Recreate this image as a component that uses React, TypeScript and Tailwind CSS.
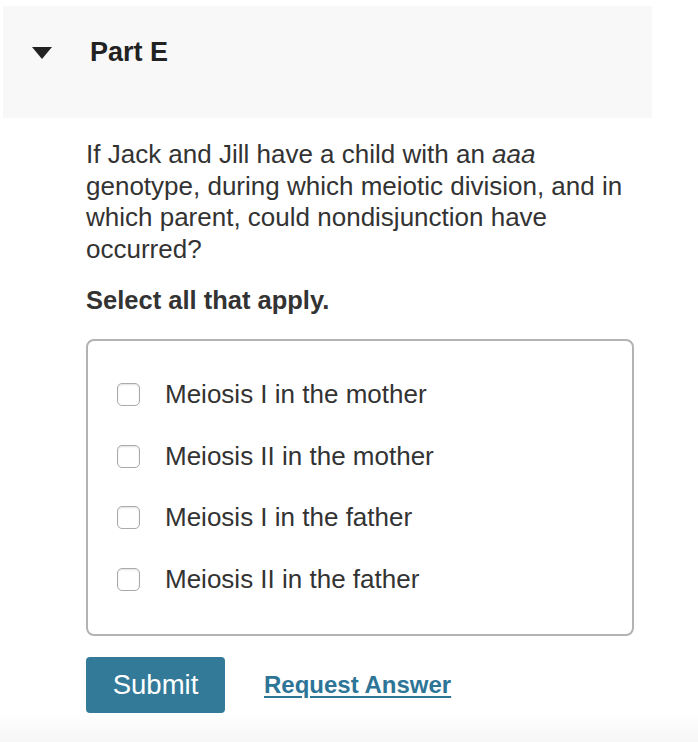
import React from 'react';

const options = [
    'Meiosis I in the mother',
    'Meiosis II in the mother',
    'Meiosis I in the father',
    'Meiosis II in the father',
];

export default function App() {
    return (
        <div className="w-[698px] h-[742px] bg-white overflow-hidden flex flex-col text-[#333]" style={{ fontFamily: '"Liberation Sans", Arial, sans-serif' }}>
            <div className="ml-[3px] mt-[6px] w-[649px] h-[112px] bg-[#f8f8f8] flex items-center shrink-0">
                <svg className="ml-[29px] mt-[-18px]" width="20" height="12" viewBox="0 0 20 12">
                    <polygon points="0,0 20,0 10,12" fill="#222" />
                </svg>
                <h2 className="ml-[38px] mt-[-20px] text-[27px] font-bold text-[#222]">Part E</h2>
            </div>

            <div className="pl-[86px] w-[634px] box-content">
                <p className="mt-[21px] text-[26px] leading-[31.5px] w-[548px]">
                    If Jack and Jill have a child with an <i>aaa</i> genotype, during which meiotic division, and in which parent, could nondisjunction have occurred?
                </p>
                <p className="mt-[19px] text-[25.5px] leading-[32px] font-bold">Select all that apply.</p>

                <div className="mt-[23px] w-[548px] h-[297px] border-2 border-[#b3b3b3] rounded-[8px] pt-[38px] flex flex-col">
                    {options.map((o) => (
                        <label key={o} className="h-[61.5px] flex items-start">
                            <span className="ml-[29px] mt-[4px] w-[23px] h-[23px] rounded-[5px] border-[1.5px] border-[#aaaaaa] bg-white shadow-[inset_0_1px_2px_rgba(0,0,0,0.12)] shrink-0" />
                            <span className="ml-[25px] text-[26px] leading-[30px]">{o}</span>
                        </label>
                    ))}
                </div>

                <div className="mt-[21px] flex items-center">
                    <button className="w-[139px] h-[56px] rounded-[4px] bg-[#337a99] text-white text-[27.5px] leading-none">Submit</button>
                    <a href="#" className="ml-[39px] text-[24px] font-bold text-[#2d7597] underline underline-offset-[3px]">Request Answer</a>
                </div>
            </div>
            <div className="mt-auto h-[30px] bg-gradient-to-b from-white to-[#f6f6f6]" />
        </div>
    );
}
